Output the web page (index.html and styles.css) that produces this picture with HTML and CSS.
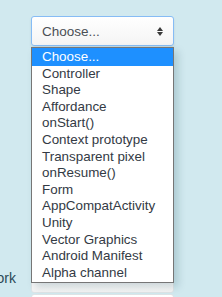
FILE: index.html
```html
<!DOCTYPE html>
<html>
	<head>
		<meta charset="utf-8" />
		<title></title>
		<link rel="stylesheet" href="styles.css">
	</head>
	<body>
		<div id="form">
			<div class="row first">
				<div class="label"></div>
				<div class="sel focus">
					<span>Choose...</span>
					<i class="arrows"></i>
				</div>
			</div>
			<div class="row second">
				<div class="label"><span>Network</span></div>
				<div class="sel">
					<span>Choose...</span>
					<i class="arrows"></i>
				</div>
			</div>
			<div class="row">
				<div class="label"></div>
				<div class="sel"></div>
			</div>
			<ul id="list">
				<li class="on">Choose...</li>
				<li>Controller</li>
				<li>Shape</li>
				<li>Affordance</li>
				<li>onStart()</li>
				<li>Context prototype</li>
				<li>Transparent pixel</li>
				<li>onResume()</li>
				<li>Form</li>
				<li>AppCompatActivity</li>
				<li>Unity</li>
				<li>Vector Graphics</li>
				<li>Android Manifest</li>
				<li>Alpha channel</li>
			</ul>
		</div>
	</body>
</html>
```

FILE: styles.css
```css
html,body,ul,li{
	margin: 0;
	padding: 0;
}
ul,li{
	list-style: none;
}
body{
	background: #d1e9ef;
	font-family: "Liberation Sans", Arial, sans-serif;
	overflow: hidden;
}
#form{
	position: relative;
	padding-top: 16px;
}
.row{
	display: flex;
	align-items: center;
	gap: 15px;
	margin-bottom: 1px;
}
.row.second{
	margin-top: 217px;
}
.label{
	width: 16px;
	display: flex;
	justify-content: flex-end;
	white-space: nowrap;
	font-size: 14px;
	color: #2c4a57;
}
.sel{
	width: 121px;
	height: 28px;
	border: 1px solid #dfe4e6;
	border-radius: 3px;
	background: linear-gradient(#fff, #f4f4f4);
	display: flex;
	align-items: center;
	justify-content: space-between;
	padding: 0 10px;
	font-size: 13.5px;
	color: #4a4f55;
}
.sel.focus{
	border-color: #86bcf5;
	box-shadow: 0 2px 3px rgba(0,0,0,.08);
}
.arrows{
	width: 6px;
	height: 9px;
	position: relative;
}
.arrows:before,.arrows:after{
	content: "";
	position: absolute;
	left: 0;
	border-left: 3px solid transparent;
	border-right: 3px solid transparent;
}
.arrows:before{
	top: 0;
	border-bottom: 4px solid #3a3a3a;
}
.arrows:after{
	bottom: 0;
	border-top: 4px solid #3a3a3a;
}
#list{
	position: absolute;
	top: 47px;
	left: 31px;
	width: 141px;
	border: 1px solid #767676;
	background: #fff;
	padding: 1px 0;
	box-shadow: 4px 4px 8px rgba(0,60,80,.18);
}
#list li{
	height: 16.6px;
	line-height: 16.6px;
	padding-left: 10px;
	font-size: 13.4px;
	color: #333a44;
	white-space: nowrap;
}
#list li.on{
	background: #1e90ff;
	color: #fff;
	margin-top: -1px;
	padding-top: 1px;
}
```
